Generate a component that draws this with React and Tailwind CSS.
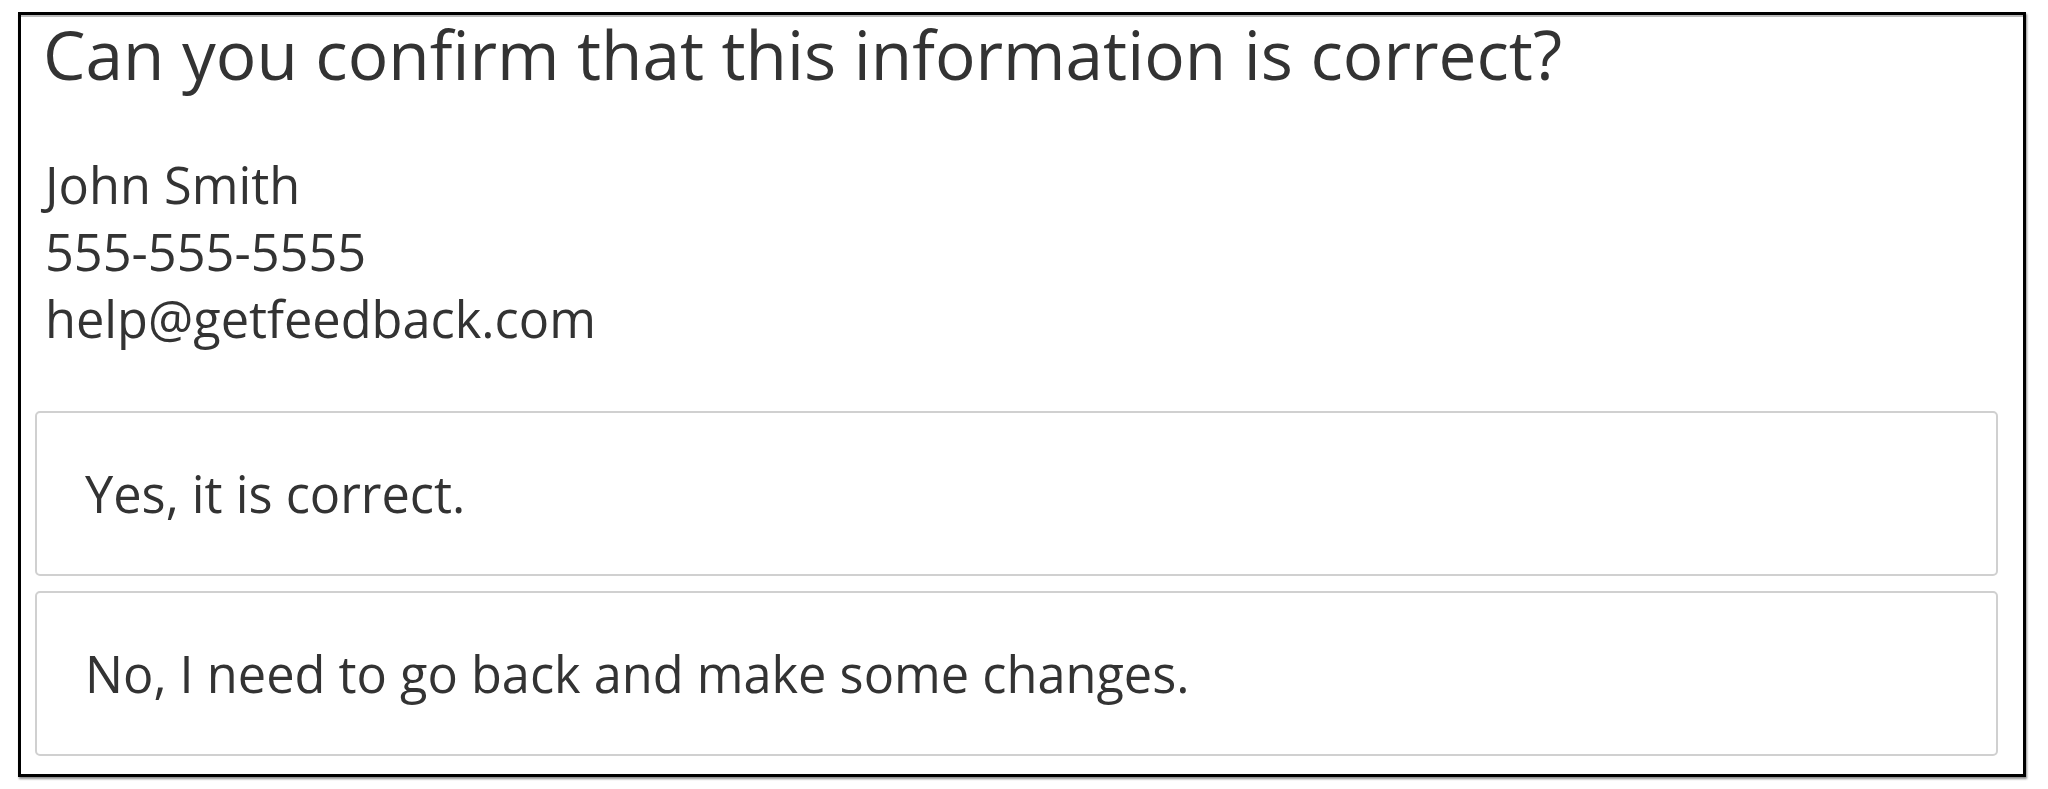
import React from 'react';

const options = [
  'Yes, it is correct.',
  'No, I need to go back and make some changes.',
];

export default function App() {
  return (
    <div className="w-[2048px] h-[789px] bg-white pt-[12px] pl-[18px] font-['Open_Sans',sans-serif] text-[#333]">
      <div className="w-[2008px] h-[765px] border-[3px] border-black shadow-[1px_2px_2px_rgba(0,0,0,0.45),inset_0_2px_0_#bbb]">
        <h1 className="pl-[22px] text-[67.5px] leading-[78px] font-normal">
          Can you confirm that this information is correct?
        </h1>
        <div className="pl-[24px] mt-[58px] text-[50.5px] leading-[67px]">
          <div>John Smith</div>
          <div>555-555-5555</div>
          <div>help@getfeedback.com</div>
        </div>
        <div className="mt-[59px] ml-[14px] mr-[25px] flex flex-col gap-[15px]">
          {options.map((o, i) => (
            <div key={i} className="border-2 border-[#d0d0d0] rounded-[5px] pl-[48px] py-[47px] text-[50.5px] leading-[67px]">
              {o}
            </div>
          ))}
        </div>
      </div>
    </div>
  );
}
